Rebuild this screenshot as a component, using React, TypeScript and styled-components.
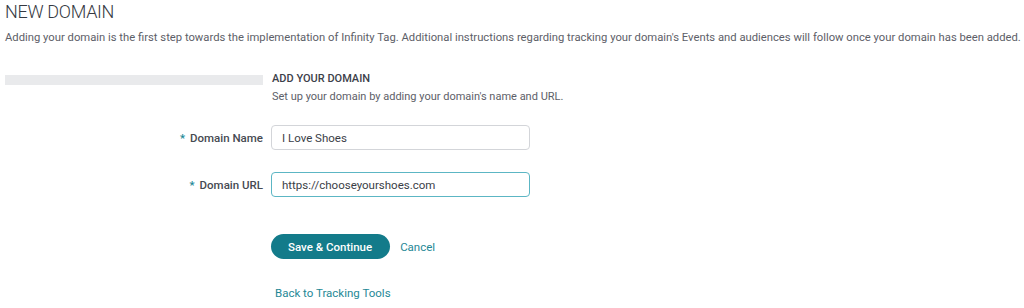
import React, { useState } from 'react';
import styled, { createGlobalStyle } from 'styled-components';

const GlobalStyle = createGlobalStyle`
  body {
    margin: 0;
    background: #ffffff;
    font-family: Roboto, "Liberation Sans", Arial, sans-serif;
  }
`;

const s = {
  Page: styled.section`
    padding: 0 5px;
    color: #3c4049;
  `,
  Title: styled.h1`
    margin: 0;
    font-size: 18px;
    font-weight: 300;
    letter-spacing: -0.3px;
    line-height: 24px;
    color: #353942;
  `,
  Description: styled.p`
    margin: 6px 0 0;
    font-size: 11.25px;
    line-height: 16px;
    white-space: nowrap;
    color: #5d6068;
  `,
  Form: styled.div`
    display: grid;
    grid-template-columns: 258px 1fr;
    column-gap: 8px;
    margin-top: 26px;
  `,
  SideBar: styled.div`
    height: 10px;
    margin-top: 3px;
    background: #e9eaec;
  `,
  SectionHead: styled.div`
    display: flex;
    flex-direction: column;
    padding-left: 1px;
  `,
  SectionTitle: styled.h2`
    margin: 0;
    font-size: 11px;
    font-weight: 500;
    line-height: 14px;
    color: #3c4049;
  `,
  SectionText: styled.p`
    margin: 4px 0 0;
    font-size: 11px;
    line-height: 14px;
    color: #5d6068;
  `,
  Label: styled.label<{ $top: number }>`
    display: flex;
    justify-content: flex-end;
    align-items: center;
    gap: 5px;
    height: 25px;
    margin-top: ${(p) => p.$top}px;
    font-size: 11.5px;
    font-weight: 500;
    color: #464a52;
  `,
  Star: styled.span`
    color: #1b8896;
  `,
  Field: styled.input<{ $top: number; $focused?: boolean }>`
    box-sizing: border-box;
    width: 259px;
    height: 25px;
    margin-top: ${(p) => p.$top}px;
    padding: 0 10px;
    border: 1px solid ${(p) => (p.$focused ? '#5cb6c4' : '#d3d5d9')};
    border-radius: 4px;
    font-family: inherit;
    font-size: 11.5px;
    color: #3a3e47;
    caret-color: #222;
    outline: none;
  `,
  Actions: styled.div`
    display: flex;
    align-items: center;
    gap: 10px;
    margin-top: 37px;
  `,
  PrimaryButton: styled.button`
    height: 25px;
    padding: 0 18px 0 17px;
    border: none;
    border-radius: 13px;
    background: #137b8a;
    color: #ffffff;
    font-family: inherit;
    font-size: 11.5px;
    font-weight: 500;
    cursor: pointer;
  `,
  Link: styled.a<{ $top?: number }>`
    margin-top: ${(p) => p.$top || 0}px;
    padding-left: ${(p) => (p.$top ? 4 : 0)}px;
    font-size: 11.5px;
    color: #1f8896;
    text-decoration: none;
    cursor: pointer;
  `,
  Empty: styled.div``,
};

const App = (): JSX.Element => {
  const [name, setName] = useState('I Love Shoes');
  const [url, setUrl] = useState('https://chooseyourshoes.com');

  return (
    <s.Page>
      <GlobalStyle />
      <s.Title>NEW DOMAIN</s.Title>
      <s.Description>
        Adding your domain is the first step towards the implementation of Infinity Tag. Additional instructions
        regarding tracking your domain&apos;s Events and audiences will follow once your domain has been added.
      </s.Description>
      <s.Form>
        <s.SideBar />
        <s.SectionHead>
          <s.SectionTitle>ADD YOUR DOMAIN</s.SectionTitle>
          <s.SectionText>Set up your domain by adding your domain&apos;s name and URL.</s.SectionText>
        </s.SectionHead>

        <s.Label $top={21}>
          <s.Star>*</s.Star>Domain Name
        </s.Label>
        <s.Field $top={21} value={name} onChange={(e) => setName(e.target.value)} />

        <s.Label $top={22}>
          <s.Star>*</s.Star>Domain URL
        </s.Label>
        <s.Field $top={22} $focused autoFocus value={url} onChange={(e) => setUrl(e.target.value)} />

        <s.Empty />
        <s.Actions>
          <s.PrimaryButton>Save &amp; Continue</s.PrimaryButton>
          <s.Link>Cancel</s.Link>
        </s.Actions>

        <s.Empty />
        <s.Link $top={27}>Back to Tracking Tools</s.Link>
      </s.Form>
    </s.Page>
  );
};

export default App;
